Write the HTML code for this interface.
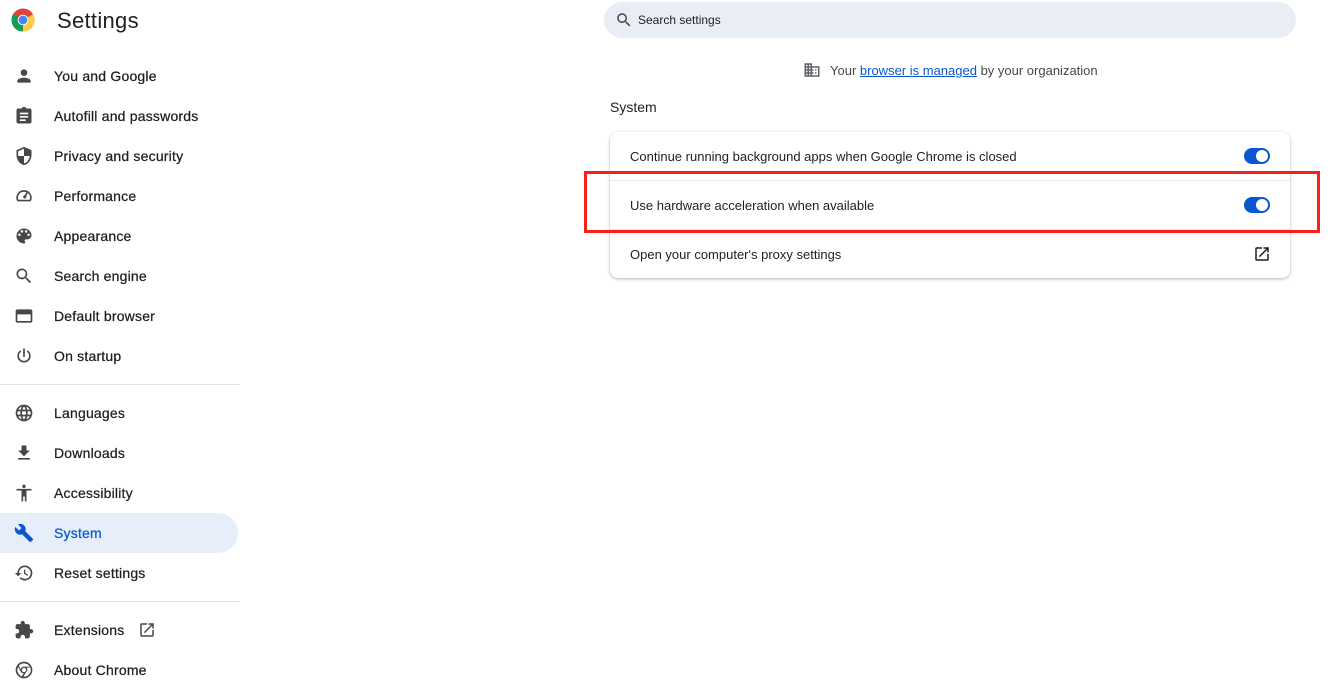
<!DOCTYPE html>
<html><head><meta charset="utf-8"><style>
body{margin:0;width:1341px;height:687px;background:#fff;font-family:"Liberation Sans",sans-serif;color:#1f1f1f;position:relative;overflow:hidden}
.a{position:absolute}
.nav{position:absolute;left:0;width:238px;height:40px;font-size:14px;letter-spacing:0.2px;line-height:40px}
.nav span{position:absolute;left:54px;top:0;-webkit-text-stroke:0.25px currentColor}
.nav svg{position:absolute;left:14px;top:10px;width:20px;height:20px;fill:#474747}
.sel{background:#e6eef9;border-radius:0 20px 20px 0;color:#0b57d0}
.sel svg{fill:#0b57d0}
.sep{position:absolute;left:0;width:240px;height:1px;background:#e3e3e3}
.row{position:absolute;left:630px;font-size:13px;color:#1f1f1f}
.tg{position:absolute;left:1244px;width:26px;height:16px;border-radius:8px;background:#0b57d0}
.tg:after{content:"";position:absolute;right:2px;top:2px;width:12px;height:12px;border-radius:50%;background:#fff}
</style></head><body>
<svg class="a" style="left:11px;top:8px" width="24" height="24" viewBox="0 0 24 24"><circle cx="12" cy="12" r="11.5" fill="#db4437"/><path d="M12 12 L2 17.75 A11.5 11.5 0 0 0 12 23.5 Z" fill="#0f9d58"/><path d="M12 12 L2 17.75 A11.5 11.5 0 0 1 .5 12 A11.5 11.5 0 0 1 2 6.25Z" fill="#0f9d58"/><path d="M12 12 L23.5 12 A11.5 11.5 0 0 1 12 23.5Z" fill="#ffcd40"/><path d="M12 12 L22 6.25 A11.5 11.5 0 0 1 23.5 12Z" fill="#ffcd40"/><circle cx="12" cy="12" r="5.3" fill="#fff"/><circle cx="12" cy="12" r="4.4" fill="#4285f4"/></svg>
<div class="a" style="left:57px;top:8px;font-size:22px;color:#1f1f1f;letter-spacing:0.3px">Settings</div>

<div class="nav" style="top:56px"><svg viewBox="0 0 24 24"><path d="M12 12c2.2 0 4-1.8 4-4s-1.8-4-4-4-4 1.8-4 4 1.8 4 4 4zm0 2c-2.7 0-8 1.3-8 4v2h16v-2c0-2.7-5.3-4-8-4z"/></svg><span>You and Google</span></div>
<div class="nav" style="top:96px"><svg viewBox="0 0 24 24"><path d="M19 3h-4.2C14.4 1.8 13.3 1 12 1s-2.4.8-2.8 2H5c-1.1 0-2 .9-2 2v14c0 1.1.9 2 2 2h14c1.1 0 2-.9 2-2V5c0-1.1-.9-2-2-2zM7 8h10v2H7zm0 4h10v2H7zm0 4h7v2H7z"/></svg><span>Autofill and passwords</span></div>
<div class="nav" style="top:136px"><svg viewBox="0 0 24 24"><path d="M12 1L3 5v6c0 5.6 3.8 10.7 9 12 5.2-1.3 9-6.4 9-12V5l-9-4zm0 11h7c-.5 4.1-3.3 7.8-7 8.9V12H5V6.3l7-3.1V12z"/></svg><span>Privacy and security</span></div>
<div class="nav" style="top:176px"><svg viewBox="0 0 24 24"><path d="M12 5a9 9 0 0 0-8 13.5h16A9 9 0 0 0 12 5zm0 2c1 0 2 .2 2.9.6L13 11a2 2 0 1 0 1.7 1l2-3.6A7 7 0 0 1 18.8 16.5H5.2A7 7 0 0 1 12 7z"/></svg><span>Performance</span></div>
<div class="nav" style="top:216px"><svg viewBox="0 0 24 24"><path d="M12 3a9 9 0 0 0 0 18c.8 0 1.5-.7 1.5-1.5 0-.4-.1-.7-.4-1-.2-.3-.4-.6-.4-1 0-.8.7-1.5 1.5-1.5H16c2.8 0 5-2.2 5-5 0-4.4-4-8-9-8zM6.5 12a1.5 1.5 0 1 1 0-3 1.5 1.5 0 0 1 0 3zm3-4a1.5 1.5 0 1 1 0-3 1.5 1.5 0 0 1 0 3zm5 0a1.5 1.5 0 1 1 0-3 1.5 1.5 0 0 1 0 3zm3 4a1.5 1.5 0 1 1 0-3 1.5 1.5 0 0 1 0 3z"/></svg><span>Appearance</span></div>
<div class="nav" style="top:256px"><svg viewBox="0 0 24 24"><path d="M15.5 14h-.8l-.3-.3A6.5 6.5 0 1 0 9.5 16c1.6 0 3.1-.6 4.2-1.6l.3.3v.8l5 5 1.5-1.5-5-5zm-6 0C7 14 5 12 5 9.5S7 5 9.5 5 14 7 14 9.5 12 14 9.5 14z"/></svg><span>Search engine</span></div>
<div class="nav" style="top:296px"><svg viewBox="0 0 24 24"><path d="M20 4H4c-1.1 0-2 .9-2 2v12c0 1.1.9 2 2 2h16c1.1 0 2-.9 2-2V6c0-1.1-.9-2-2-2zm0 14H4v-8h16v8z"/></svg><span>Default browser</span></div>
<div class="nav" style="top:336px"><svg viewBox="0 0 24 24"><path d="M11 3h2v10h-2zm5.6 2.4l-1.4 1.4A6 6 0 1 1 8.8 6.8L7.4 5.4A8 8 0 1 0 16.6 5.4z"/></svg><span>On startup</span></div>
<div class="sep" style="top:384px"></div>
<div class="nav" style="top:393px"><svg viewBox="0 0 24 24"><path d="M12 2a10 10 0 1 0 0 20 10 10 0 0 0 0-20zm6.9 6h-3a15.6 15.6 0 0 0-1.4-3.6A8 8 0 0 1 18.9 8zM12 4c.8 1.2 1.5 2.5 1.9 4h-3.8c.4-1.4 1.1-2.8 1.9-4zM4.3 14a8 8 0 0 1 0-4h3.4a16 16 0 0 0 0 4zm.8 2h3c.3 1.3.8 2.5 1.4 3.6A8 8 0 0 1 5.1 16zm3-8h-3a8 8 0 0 1 4.3-3.6C8.9 5.5 8.4 6.7 8.1 8zM12 20c-.8-1.2-1.5-2.5-1.9-4h3.8c-.4 1.4-1.1 2.8-1.9 4zm2.3-6H9.7a14.7 14.7 0 0 1 0-4h4.6a14.7 14.7 0 0 1 0 4zm.3 5.6c.6-1.1 1.1-2.3 1.4-3.6h3a8 8 0 0 1-4.4 3.6zm1.7-5.6a16 16 0 0 0 0-4h3.4a8 8 0 0 1 0 4z"/></svg><span>Languages</span></div>
<div class="nav" style="top:433px"><svg viewBox="0 0 24 24"><path d="M19 9h-4V3H9v6H5l7 7 7-7zM5 18v2h14v-2z"/></svg><span>Downloads</span></div>
<div class="nav" style="top:473px"><svg viewBox="0 0 24 24"><path d="M12 2a2 2 0 1 1 0 4 2 2 0 0 1 0-4zm9 7h-6v13h-2v-6h-2v6H9V9H3V7h18z"/></svg><span>Accessibility</span></div>
<div class="nav sel" style="top:513px"><svg viewBox="0 0 24 24"><path d="M22.7 19l-9.1-9.1c.9-2.3.4-5-1.5-6.9-2-2-5-2.4-7.4-1.3L9 6 6 9 1.6 4.7C.4 7.1.9 10.1 2.9 12.1c1.9 1.9 4.6 2.4 6.9 1.5l9.1 9.1c.4.4 1 .4 1.4 0l2.3-2.3c.5-.4.5-1.1.1-1.4z"/></svg><span>System</span></div>
<div class="nav" style="top:553px"><svg viewBox="0 0 24 24"><path d="M13 3a9 9 0 0 0-9 9H1l3.9 3.9L9 12H6a7 7 0 1 1 2.1 5l-1.4 1.4A9 9 0 1 0 13 3zm-1 5v5l4.3 2.5.7-1.2-3.5-2.1V8z"/></svg><span>Reset settings</span></div>
<div class="sep" style="top:601px"></div>
<div class="nav" style="top:610px"><svg viewBox="0 0 24 24"><path d="M20.5 11H19V7c0-1.1-.9-2-2-2h-4V3.5a2.5 2.5 0 0 0-5 0V5H4c-1.1 0-2 .9-2 2v3.8h1.5a2.7 2.7 0 0 1 0 5.4H2V20c0 1.1.9 2 2 2h3.8v-1.5a2.7 2.7 0 0 1 5.4 0V22H17c1.1 0 2-.9 2-2v-4h1.5a2.5 2.5 0 0 0 0-5z"/></svg><span>Extensions</span></div>
<svg class="a" style="left:138px;top:621px" width="18" height="18" viewBox="0 0 24 24" fill="#474747"><path d="M19 19H5V5h7V3H5a2 2 0 0 0-2 2v14a2 2 0 0 0 2 2h14a2 2 0 0 0 2-2v-7h-2v7zM14 3v2h3.6l-9.8 9.8 1.4 1.4L19 6.4V10h2V3z"/></svg>
<div class="nav" style="top:650px"><svg viewBox="0 0 24 24"><path d="M12 2a10 10 0 1 0 0 20 10 10 0 0 0 0-20zm0 2a8 8 0 0 1 6.9 4H12a4 4 0 0 0-3.9 3.1L5.8 7A8 8 0 0 1 12 4zm2.5 8a2.5 2.5 0 1 1-5 0 2.5 2.5 0 0 1 5 0zM4 12c0-1.3.3-2.5.9-3.6l3.4 5.9a4 4 0 0 0 3.3 1.7L9.3 19.6A8 8 0 0 1 4 12zm8 8h-.6l3.4-5.9c.7-.8 1.2-1.9 1.2-3 0-.8-.2-1.5-.6-2.1h4.2A8 8 0 0 1 12 20z"/></svg><span>About Chrome</span></div>

<div class="a" style="left:604px;top:2px;width:692px;height:36px;border-radius:18px;background:#e9eef6"></div>
<svg class="a" style="left:615px;top:11px" width="18" height="18" viewBox="0 0 24 24" fill="#474747"><path d="M15.5 14h-.8l-.3-.3A6.5 6.5 0 1 0 9.5 16c1.6 0 3.1-.6 4.2-1.6l.3.3v.8l5 5 1.5-1.5-5-5zm-6 0C7 14 5 12 5 9.5S7 5 9.5 5 14 7 14 9.5 12 14 9.5 14z"/></svg>
<div class="a" style="left:638px;top:13px;font-size:12px;color:#1f1f1f">Search settings</div>

<svg class="a" style="left:803px;top:61px" width="18" height="18" viewBox="0 0 24 24" fill="#5f6368"><path d="M12 7V3H2v18h20V7H12zM6 19H4v-2h2v2zm0-4H4v-2h2v2zm0-4H4V9h2v2zm0-4H4V5h2v2zm4 12H8v-2h2v2zm0-4H8v-2h2v2zm0-4H8V9h2v2zm0-4H8V5h2v2zm10 12h-8v-2h2v-2h-2v-2h2v-2h-2V9h8v10zm-2-8h-2v2h2v-2zm0 4h-2v2h2v-2z"/></svg>
<div class="a" style="left:830px;top:63px;font-size:13px;color:#474747">Your <span style="color:#0b57d0;text-decoration:underline">browser is managed</span> by your organization</div>
<div class="a" style="left:610px;top:99px;font-size:14px;color:#1f1f1f">System</div>

<div class="a" style="left:610px;top:132px;width:680px;height:146px;border-radius:8px;background:#fff;box-shadow:0 1px 3px rgba(0,0,0,.3)"></div>
<div class="a" style="left:610px;top:180px;width:680px;height:1px;background:#e8e8e8"></div>
<div class="a" style="left:610px;top:229px;width:680px;height:1px;background:#e8e8e8"></div>
<div class="row" style="top:149px">Continue running background apps when Google Chrome is closed</div>
<div class="row" style="top:198px">Use hardware acceleration when available</div>
<div class="row" style="top:247px">Open your computer's proxy settings</div>
<div class="tg" style="top:148px"></div>
<div class="tg" style="top:197px"></div>
<svg class="a" style="left:1253px;top:245px" width="18" height="18" viewBox="0 0 24 24" fill="#1f1f1f"><path d="M19 19H5V5h7V3H5a2 2 0 0 0-2 2v14a2 2 0 0 0 2 2h14a2 2 0 0 0 2-2v-7h-2v7zM14 3v2h3.6l-9.8 9.8 1.4 1.4L19 6.4V10h2V3z"/></svg>

<div class="a" style="left:584px;top:171px;width:730px;height:56px;border:3px solid #f5211a"></div>
</body></html>
